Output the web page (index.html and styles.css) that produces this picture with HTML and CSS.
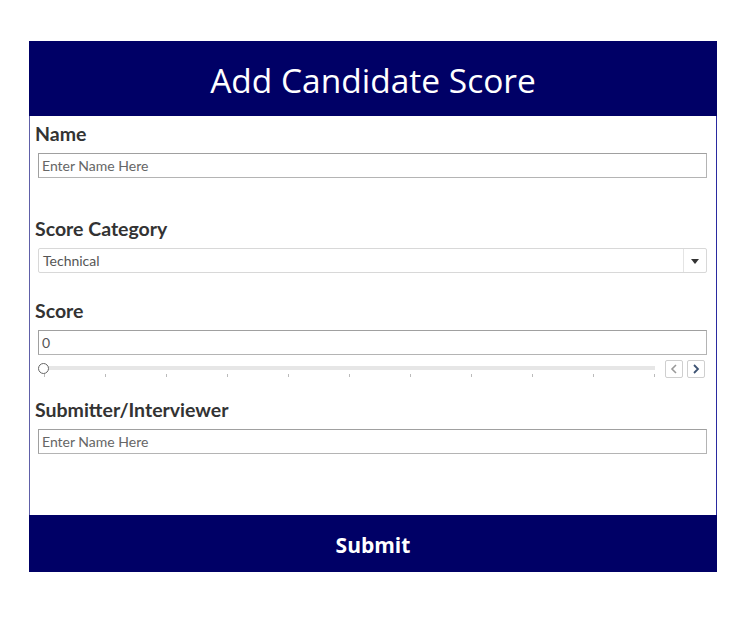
FILE: index.html
```html
<!DOCTYPE html>
<html lang="en">
<head>
    <meta charset="UTF-8">
    <meta name="viewport" content="width=device-width, initial-scale=1.0">
    <title>Add Candidate Score</title>
    <link rel="stylesheet" href="styles.css">
</head>
<body>
    <div class="card">
        <div class="card-header">Add Candidate Score</div>

        <div class="card-body">
            <div class="field field-name">
                <label for="name">Name</label>
                <input type="text" id="name" class="text-input" placeholder="Enter Name Here">
            </div>

            <div class="field field-category">
                <label for="category">Score Category</label>
                <div class="select">
                    <span class="select-value">Technical</span>
                    <span class="select-arrow"></span>
                </div>
            </div>

            <div class="field field-score">
                <label for="score">Score</label>
                <input type="text" id="score" class="text-input" value="0">
                <div class="slider-row">
                    <div class="slider">
                        <div class="slider-track"></div>
                        <div class="slider-thumb"></div>
                        <div class="ticks">
                            <span></span><span></span><span></span><span></span>
                            <span></span><span></span><span></span><span></span>
                            <span></span><span></span><span></span>
                        </div>
                    </div>
                    <button class="step-btn" aria-label="Decrease">
                        <svg width="8" height="10" viewBox="0 0 8 10"><path d="M6 1 L2 5 L6 9" fill="none" stroke="#999" stroke-width="1.6"/></svg>
                    </button>
                    <button class="step-btn" aria-label="Increase">
                        <svg width="8" height="10" viewBox="0 0 8 10"><path d="M2 1 L6 5 L2 9" fill="none" stroke="#3d5373" stroke-width="1.8"/></svg>
                    </button>
                </div>
            </div>

            <div class="field field-submitter">
                <label for="submitter">Submitter/Interviewer</label>
                <input type="text" id="submitter" class="text-input" placeholder="Enter Name Here">
            </div>
        </div>

        <button class="submit-btn">Submit</button>
    </div>
</body>
</html>
```

FILE: styles.css
```css
body {
    margin: 0;
    background: #ffffff;
    font-family: Lato, "Liberation Sans", sans-serif;
}
.card {
    margin: 41px 0 0 29px;
    width: 688px;
    height: 531px;
    box-sizing: border-box;
    border-left: 1px solid #6060a8;
    border-right: 1px solid #2a2aa0;
    display: flex;
    flex-direction: column;
    background: #fff;
}
.card-header {
    height: 75px;
    box-sizing: border-box;
    padding-top: 4px;
    background: #000066;
    color: #fff;
    font-family: "Open Sans", sans-serif;
    font-size: 33.5px;
    line-height: 71px;
    text-align: center;
    margin: 0 -1px;
}
.card-body {
    flex: 1;
    padding: 0 9px 0 5px;
}
.field label {
    display: block;
    color: #333;
    font-weight: bold;
    font-size: 19.5px;
    line-height: 24px;
}
.field-name {
    padding-top: 6px;
}
.field-category {
    padding-top: 39px;
}
.field-score {
    padding-top: 26px;
}
.field-submitter {
    padding-top: 20px;
}
.text-input {
    display: block;
    box-sizing: border-box;
    width: 669px;
    height: 25px;
    margin: 7px 0 0 3px;
    padding: 0 3px;
    border: 1px solid #b4b4b4;
    border-top-color: #a0a0a0;
    border-left-color: #a0a0a0;
    font-family: Lato, sans-serif;
    font-size: 14px;
    color: #555;
    outline: none;
}
.text-input::placeholder {
    color: #666;
}
.select {
    box-sizing: border-box;
    width: 669px;
    height: 25px;
    margin: 7px 0 0 3px;
    border: 1px solid #d8d8d8;
    border-radius: 2px;
    display: flex;
    align-items: center;
}
.select-value {
    flex: 1;
    padding-left: 4px;
    font-size: 14px;
    color: #555;
}
.select-arrow {
    width: 22px;
    height: 100%;
    border-left: 1px solid #e4e4e4;
    position: relative;
}
.select-arrow::after {
    content: "";
    position: absolute;
    left: 7px;
    top: 10px;
    border-left: 4px solid transparent;
    border-right: 4px solid transparent;
    border-top: 5px solid #333;
}
.slider-row {
    display: flex;
    align-items: center;
    margin: 4px 0 0 3px;
    width: 667px;
    height: 19px;
}
.slider {
    flex: 1;
    position: relative;
    height: 19px;
}
.slider-track {
    position: absolute;
    left: 8px;
    right: 6px;
    top: 7px;
    height: 4px;
    background: #e6e6e6;
}
.slider-thumb {
    position: absolute;
    left: 0;
    top: 4px;
    width: 9px;
    height: 9px;
    border: 1px solid #666;
    border-radius: 50%;
    background: #fff;
}
.ticks {
    position: absolute;
    left: 6px;
    top: 15px;
    width: 611px;
    display: flex;
    justify-content: space-between;
}
.ticks span {
    width: 1px;
    height: 3px;
    background: #bbb;
}
.step-btn {
    width: 18px;
    height: 18px;
    margin-left: 4px;
    padding: 0;
    border: 1px solid #cfcfcf;
    border-radius: 2px;
    background: #fff;
    display: flex;
    align-items: center;
    justify-content: center;
}
.submit-btn {
    height: 57px;
    margin: 0 -1px;
    padding: 3px 0 0;
    border: none;
    background: #000066;
    color: #fff;
    font-family: "Open Sans", sans-serif;
    font-weight: bold;
    font-size: 21px;
}
```
